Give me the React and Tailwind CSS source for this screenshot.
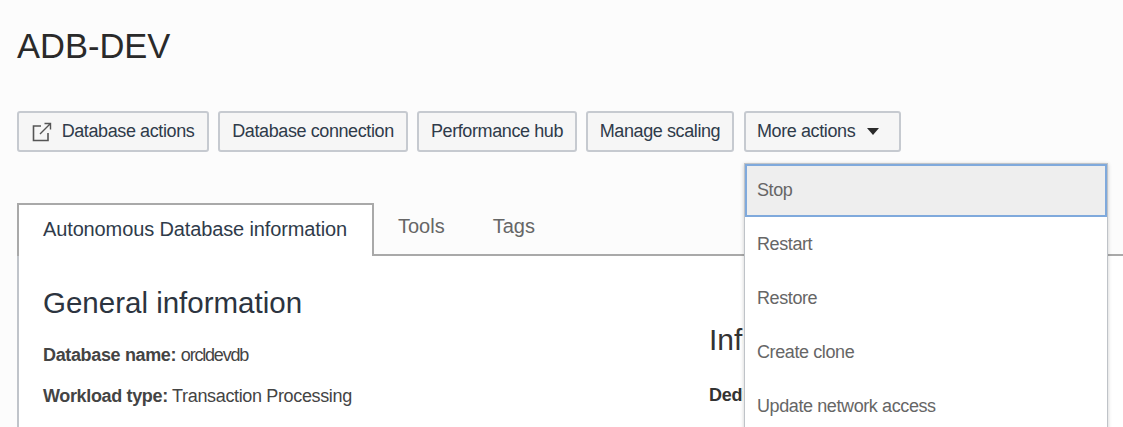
import React from "react";

const actions = [
  { label: "Database connection", width: "w-[190px]" },
  { label: "Performance hub", width: "w-[160px]" },
  { label: "Manage scaling", width: "w-[148px]" },
];
const menuItems = ["Restart", "Restore", "Create clone", "Update network access"];

const btn =
  "h-[41px] flex items-center justify-center border-2 border-[#c6cad0] rounded-[3px] bg-[#f6f6f6] text-[#2f3b4a] text-[18px] tracking-[-0.4px]";

const App = () => {
  return (
    <div className="relative w-[1123px] h-[427px] overflow-hidden bg-[#fcfcfc] font-['Liberation_Sans',Arial,sans-serif]">
      <div className="pl-[17px] pt-[24px]">
        <h1 className="h-[44px] leading-[44px] text-[34.5px] text-[#2a2a2a]">ADB-DEV</h1>

        <div className="flex gap-[9px] mt-[43px]">
          <button className={`${btn} w-[192px] gap-[10px]`}>
            <svg width="20" height="20" viewBox="0 0 20 20" fill="none" stroke="#555" strokeWidth="1.6">
              <path d="M9 4H1.5v14.5H16V11" />
              <path d="M8 12 18 2M12.5 1.5H18.5V7.5" strokeWidth="1.4" />
            </svg>
            Database actions
          </button>
          {actions.map(({ label, width }) => (
            <button key={label} className={`${btn} ${width}`}>
              {label}
            </button>
          ))}
          <button className={`${btn} w-[157px] ml-[1px] gap-[12px] !justify-start pl-[11px]`}>
            More actions
            <svg width="12" height="7" viewBox="0 0 12 7" fill="#2a2a2a">
              <path d="M0 0h12L6 7z" />
            </svg>
          </button>
        </div>

        <div className="flex mt-[51px] h-[53px] border-b-2 border-[#a9a9a9]">
          <div className="w-[357px] h-[53px] flex items-center pl-[24px] pb-[3px] bg-white border-2 border-b-0 border-[#a9a9a9] text-[20px] tracking-[-0.13px] text-[#2f3b4a]">
            Autonomous Database information
          </div>
          <div className="flex items-center gap-[48px] pl-[24px] pb-[5px] text-[20px] text-[#666]">
            <span>Tools</span>
            <span>Tags</span>
          </div>
        </div>

        <div className="relative h-[171px] border-l-2 border-[#c0c4ca] bg-white pl-[24px]">
          <h2 className="pt-[29px] text-[29.5px] leading-[36px] text-[#2c3440]">General information</h2>
          <div className="text-[18px] text-[#444] tracking-[-0.35px]">
            <p className="mt-[22px] leading-[24px]">
              <b className="font-bold">Database name:</b> <span className="tracking-[-1.2px]">orcldevdb</span>
            </p>
            <p className="mt-[17px] leading-[24px]">
              <b className="font-bold">Workload type:</b> Transaction Processing
            </p>
          </div>
          <div className="absolute left-[690px] top-[66px] w-[34px] overflow-hidden whitespace-nowrap text-[#333]">
            <p className="text-[30px] leading-[36px]">Information</p>
            <p className="mt-[25px] text-[18px] tracking-[-0.3px] leading-[24px] font-bold">Dedicated</p>
          </div>
        </div>
      </div>

      <div className="absolute left-[744px] top-[163px] w-[364px] h-[290px] bg-white border border-[#bfc3c8] shadow-[0_1px_4px_rgba(0,0,0,0.2)] text-[18px] text-[#666] tracking-[-0.4px]">
        <div className="h-[53px] flex items-center pl-[10px] bg-[#eeeeee] border-2 border-[#7fa9dc]">Stop</div>
        {menuItems.map((item) => (
          <div key={item} className="h-[54px] flex items-center pl-[12px]">
            {item}
          </div>
        ))}
      </div>
    </div>
  );
};

export default App;
